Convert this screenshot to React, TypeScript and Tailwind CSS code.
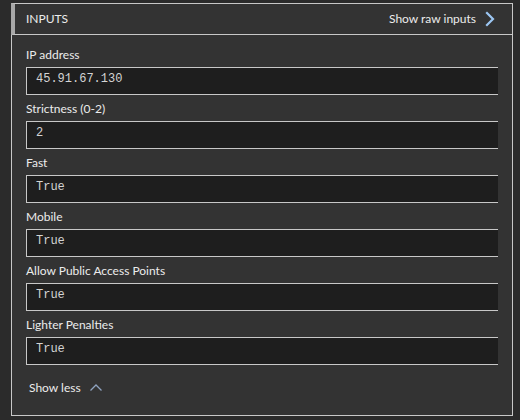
import React from "react";

const fields = [
  { label: "IP address", value: "45.91.67.130" },
  { label: "Strictness (0-2)", value: "2" },
  { label: "Fast", value: "True" },
  { label: "Mobile", value: "True" },
  { label: "Allow Public Access Points", value: "True" },
  { label: "Lighter Penalties", value: "True" },
];

export default function App() {
  return (
    <div
      className="w-[520px] h-[420px] bg-[#2b2b2b] pt-[3px] pl-[11px] text-[12px] text-[#ececec]"
      style={{ fontFamily: 'Lato, "Noto Sans", sans-serif' }}
    >
      <div className="w-[502px] bg-[#333333]">
        <div className="h-[32px] border-t border-r border-b border-l-4 border-t-[#c8c8c8] border-r-[#c8c8c8] border-b-[#c8c8c8] border-l-[#a8a8a8] flex items-center justify-between pl-[11px] pr-[17px]">
          <span className="leading-[16px]">INPUTS</span>
          <div className="flex items-center gap-[9px]">
            <span className="leading-[16px]">Show raw inputs</span>
            <svg width="10" height="16" viewBox="0 0 10 16" fill="none">
              <path d="M2 2 L8 8 L2 14" stroke="#9cc6f2" strokeWidth="2.2" strokeLinecap="square" strokeLinejoin="miter" />
            </svg>
          </div>
        </div>
        <div className="border-l border-r border-b border-[#c8c8c8] px-[14px] pt-[12px] pb-[19px]">
          <div className="flex flex-col gap-[6px]">
            {fields.map((f) => (
              <div key={f.label} className="flex flex-col">
                <div className="leading-[16px] mb-[4px]">{f.label}</div>
                <div
                  className="h-[28px] w-[472px] bg-[#1e1e1e] border-l border-t border-b border-[#c8c8c8] pl-[9px] pt-[3px] leading-[16px] text-[12px] text-[#d4d4d4]"
                  style={{ fontFamily: '"Liberation Mono", "DejaVu Sans Mono", monospace' }}
                >
                  {f.value}
                </div>
              </div>
            ))}
          </div>
          <div className="mt-[15px] pl-[3px] flex items-center gap-[8px] h-[16px]">
            <span className="leading-[16px]">Show less</span>
            <svg width="14" height="10" viewBox="0 0 14 10" fill="none">
              <path d="M1.5 7.5 L7 2 L12.5 7.5" stroke="#8fa3c0" strokeWidth="1.3" />
            </svg>
          </div>
        </div>
      </div>
    </div>
  );
}
